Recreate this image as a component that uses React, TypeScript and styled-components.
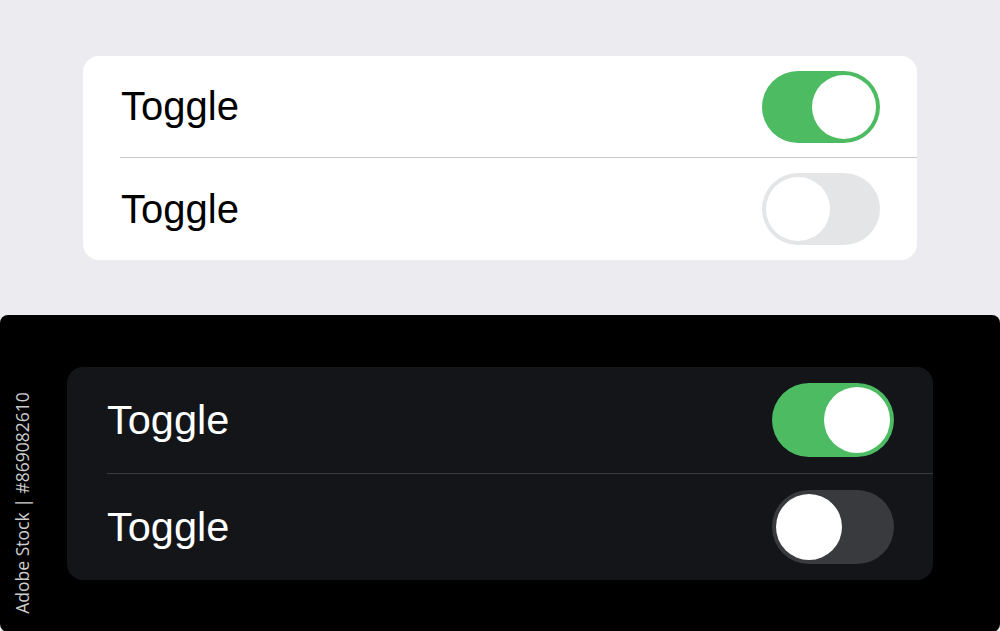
import React from "react";
import styled, { createGlobalStyle } from "styled-components";

const Global = createGlobalStyle`
  html, body { margin: 0; padding: 0; }
  body {
    background: #ebebf0;
    font-family: "Liberation Sans", Arial, sans-serif;
    width: 1000px;
    height: 631px;
    overflow: hidden;
  }
`;

const Page = styled.div`
  display: flex;
  flex-direction: column;
  width: 1000px;
  height: 631px;
`;

const LightSection = styled.section`
  padding: 56px 83px 55px;
`;

const DarkSection = styled.section`
  position: relative;
  flex: 1;
  background: #000;
  border-radius: 8px;
  padding: 52px 67px;
`;

const Card = styled.div<{ $dark?: boolean }>`
  background: ${(p) => (p.$dark ? "#131519" : "#ffffff")};
  border-radius: 16px;
  overflow: hidden;
`;

const Row = styled.div<{ $dark?: boolean; $divider?: boolean }>`
  display: flex;
  align-items: center;
  justify-content: space-between;
  padding-right: ${(p) => (p.$dark ? 39 : 37)}px;
  border-bottom: ${(p) =>
    p.$divider ? `1px solid ${p.$dark ? "#3a3b3e" : "#c6c6c8"}` : "none"};
  margin-left: ${(p) => (p.$divider ? (p.$dark ? 40 : 37) : 0)}px;
  padding-left: ${(p) => (p.$divider ? (p.$dark ? 0 : 1) : p.$dark ? 40 : 38)}px;
  height: ${(p) => (p.$dark ? 106 : p.$divider ? 101 : 102)}px;
`;

const Label = styled.span<{ $dark?: boolean }>`
  font-family: "Liberation Sans", Arial, sans-serif;
  font-size: ${(p) => (p.$dark ? 41.5 : 40)}px;
  color: ${(p) => (p.$dark ? "#ffffff" : "#000000")};
`;

const Track = styled.div<{ $on: boolean; $dark?: boolean }>`
  position: relative;
  flex: none;
  width: ${(p) => (p.$dark ? 122 : 118)}px;
  height: ${(p) => (p.$dark ? 74 : 72)}px;
  border-radius: 40px;
  background: ${(p) =>
    p.$on ? "#4cbb62" : p.$dark ? "#393a3e" : "#e4e5e7"};
`;

const Knob = styled.div<{ $on: boolean; $dark?: boolean }>`
  position: absolute;
  top: 4px;
  ${(p) => (p.$on ? "right: 4px;" : "left: 4px;")}
  width: ${(p) => (p.$dark ? 66 : 64)}px;
  height: ${(p) => (p.$dark ? 66 : 64)}px;
  border-radius: 50%;
  background: #ffffff;
`;

const Stamp = styled.div`
  position: absolute;
  left: 22px;
  top: 188px;
  transform: translate(-50%, -50%) rotate(-90deg);
  white-space: nowrap;
  font-family: "Open Sans", sans-serif;
  font-size: 17.5px;
  color: #cdcdcd;
`;

function Toggle({ on, dark }: { on: boolean; dark?: boolean }) {
  return (
    <Track $on={on} $dark={dark}>
      <Knob $on={on} $dark={dark} />
    </Track>
  );
}

function Group({ dark }: { dark?: boolean }) {
  return (
    <Card $dark={dark}>
      <Row $dark={dark} $divider>
        <Label $dark={dark}>Toggle</Label>
        <Toggle on dark={dark} />
      </Row>
      <Row $dark={dark}>
        <Label $dark={dark}>Toggle</Label>
        <Toggle on={false} dark={dark} />
      </Row>
    </Card>
  );
}

export default function App() {
  return (
    <Page>
      <Global />
      <LightSection>
        <Group />
      </LightSection>
      <DarkSection>
        <Stamp>Adobe Stock | #869082610</Stamp>
        <Group dark />
      </DarkSection>
    </Page>
  );
}
